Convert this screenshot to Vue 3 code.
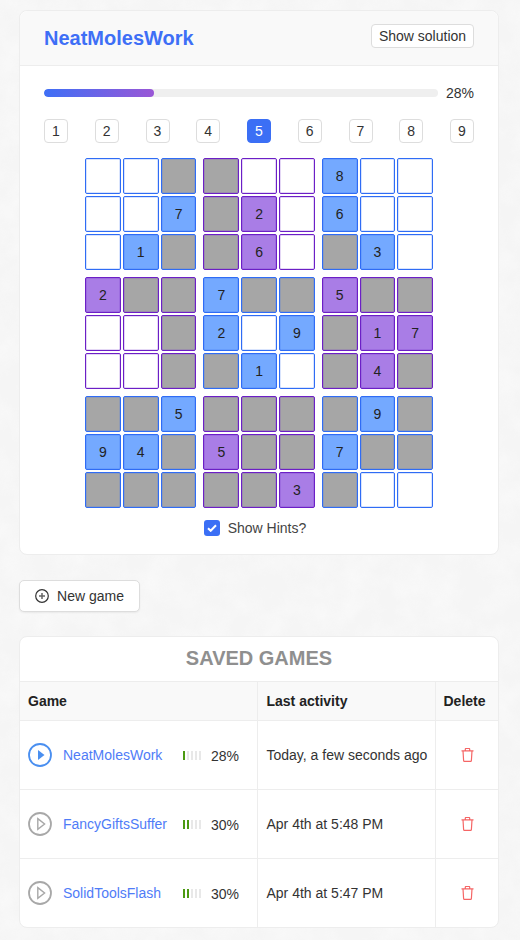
<script setup>
const rows = [
  '__x|x__|8__',
  '__7|x2_|6__',
  '_1x|x6_|x3_',
  '2xx|7xx|5xx',
  '__x|2_9|x17',
  '__x|x1_|x4x',
  'xx5|xxx|x9x',
  '94x|5xx|7xx',
  'xxx|xx3|x__',
]
const cell = (ch) => (ch === '_' ? 'empty' : ch === 'x' ? 'grey' : 'filled')
const boxes = []
for (let by = 0; by < 3; by++) {
  for (let bx = 0; bx < 3; bx++) {
    const cells = []
    for (let y = 0; y < 3; y++) {
      const part = rows[by * 3 + y].split('|')[bx]
      for (const ch of part) cells.push(ch)
    }
    boxes.push({ id: by * 3 + bx, purple: (by + bx) % 2 === 1, cells })
  }
}
const digits = [1, 2, 3, 4, 5, 6, 7, 8, 9]
const games = [
  { name: 'NeatMolesWork', pct: 28, bars: 1, when: 'Today, a few seconds ago', active: true },
  { name: 'FancyGiftsSuffer', pct: 30, bars: 2, when: 'Apr 4th at 5:48 PM', active: false },
  { name: 'SolidToolsFlash', pct: 30, bars: 2, when: 'Apr 4th at 5:47 PM', active: false },
]
</script>

<template>
  <div class="page">
    <svg class="texture" width="520" height="940" aria-hidden="true">
      <filter id="paper" x="0" y="0" width="100%" height="100%">
        <feTurbulence type="fractalNoise" baseFrequency="0.035" numOctaves="4" seed="7"/>
        <feColorMatrix type="matrix" values="0 0 0 0 1  0 0 0 0 1  0 0 0 0 1  1.6 0 0 0 -0.55"/>
      </filter>
      <rect width="520" height="940" filter="url(#paper)"/>
    </svg>
    <section class="card game">
      <header class="head">
        <h1 class="title">NeatMolesWork</h1>
        <button class="btn small">Show solution</button>
      </header>
      <div class="body">
        <div class="progress">
          <div class="track"><div class="fill"></div></div>
          <span class="pct">28%</span>
        </div>
        <div class="digits">
          <button v-for="d in digits" :key="d" class="digit" :class="{ on: d === 5 }">{{ d }}</button>
        </div>
        <div class="board">
          <div v-for="b in boxes" :key="b.id" class="box" :class="{ purple: b.purple }">
            <div v-for="(c, i) in b.cells" :key="i" class="cell" :class="cell(c)">{{ c === '_' || c === 'x' ? '' : c }}</div>
          </div>
        </div>
        <label class="hints">
          <span class="check">
            <svg width="10" height="8" viewBox="0 0 10 8" fill="none"><path d="M1 4.2 3.7 6.8 9 1.2" stroke="#fff" stroke-width="2"/></svg>
          </span>
          Show Hints?
        </label>
      </div>
    </section>

    <button class="btn newgame">
      <svg width="14" height="14" viewBox="0 0 14 14" fill="none" stroke="#333" stroke-width="1.2">
        <circle cx="7" cy="7" r="6.3"/><path d="M7 4v6M4 7h6" stroke="#666" stroke-width="1.5"/>
      </svg>
      New game
    </button>

    <section class="card saved">
      <h2 class="saved-title">SAVED GAMES</h2>
      <table class="table">
        <colgroup><col class="c1"><col class="c2"><col class="c3"></colgroup>
        <thead>
          <tr><th>Game</th><th>Last activity</th><th class="th-del">Delete</th></tr>
        </thead>
        <tbody>
          <tr v-for="g in games" :key="g.name">
            <td>
              <div class="game-cell">
                <svg class="play" width="24" height="24" viewBox="0 0 24 24" fill="none" :stroke="g.active ? '#4a8ff0' : '#a8a8a8'" stroke-width="1.8">
                  <circle cx="12" cy="12" r="11"/>
                  <path v-if="g.active" d="M10 7 16.5 12 10 17Z" fill="#4a8ff0" stroke="none"/>
                  <path v-else d="M9.8 6.6 16.6 12 9.8 17.4Z" stroke-width="1.4"/>
                </svg>
                <a class="link">{{ g.name }}</a>
                <span class="mini">
                  <i v-for="n in 5" :key="n" :class="{ lit: n <= g.bars }"></i>
                </span>
                <span class="mini-pct">{{ g.pct }}%</span>
              </div>
            </td>
            <td>{{ g.when }}</td>
            <td class="del">
              <svg width="13" height="14" viewBox="0 0 13 14" fill="none" stroke="#f56565" stroke-width="1.2">
                <path d="M.5 2.8h12M2 2.8l.6 9.6c0 .6.4 1 1 1h5.8c.6 0 1-.4 1-1l.6-9.6M4.3 2.8V1.2c0-.4.3-.7.7-.7h3c.4 0 .7.3.7.7v1.6"/>
              </svg>
            </td>
          </tr>
        </tbody>
      </table>
    </section>
  </div>
</template>

<style>
html, body { background: #f5f5f5; margin: 0; }
</style>

<style scoped>
.page {
  position: relative;
  box-sizing: border-box;
  width: 520px;
  height: 940px;
  overflow: hidden;
  padding: 10px 21px 0 19px;
  font-family: "Liberation Sans", Arial, sans-serif;
  font-size: 14px;
  color: #333;
}
.texture {
  position: absolute;
  inset: 0;
  opacity: .45;
}
.card {
  position: relative;
  background: #fff;
  border: 1px solid #ededed;
  border-radius: 8px;
}
.game { height: 545px; box-sizing: border-box; }
.head {
  display: flex;
  align-items: center;
  justify-content: space-between;
  height: 55px;
  box-sizing: border-box;
  padding: 0 24px;
  background: #f9f9f9;
  border-bottom: 1px solid #ededed;
  border-radius: 8px 8px 0 0;
}
.title {
  margin: 0;
  font-size: 20px;
  font-weight: 700;
  color: #3e6ff6;
}
.btn {
  font-family: inherit;
  color: #333;
  background: #fff;
  border: 1px solid #ddd;
  border-radius: 4px;
  padding: 0;
}
.small { height: 24px; width: 103px; font-size: 14px; margin-top: -5px; }
.body { padding: 16px 24px 0; }
.progress {
  display: flex;
  align-items: center;
  gap: 8px;
  height: 22px;
}
.track {
  flex: 1;
  height: 8px;
  background: #efefef;
  border-radius: 4px;
  overflow: hidden;
}
.fill {
  width: 28%;
  height: 100%;
  border-radius: 4px;
  background: linear-gradient(90deg, #3e6ff6, #9a57d6);
}
.pct { width: 28px; font-size: 14px; text-align: right; }
.digits {
  display: flex;
  justify-content: space-between;
  margin-top: 15px;
}
.digit {
  box-sizing: border-box;
  width: 24px;
  height: 24px;
  padding: 0;
  font-family: inherit;
  font-size: 14px;
  color: #333;
  background: #fff;
  border: 1px solid #ddd;
  border-radius: 4px;
}
.digit.on {
  background: #3b6ff5;
  border-color: #3b6ff5;
  color: #fff;
}
.board {
  display: grid;
  grid-template-columns: repeat(3, 111.33px);
  gap: 7px;
  justify-content: center;
  margin: 15px -1px 0 -0.8px;
}
.box {
  display: grid;
  grid-template-columns: repeat(3, 1fr);
  grid-auto-rows: 36px;
  gap: 2px;
  --line: #2f6cf5;
  --soft: rgba(47, 108, 245, .18);
  --tint: #74a9ff;
}
.box.purple {
  --line: #6c1fc6;
  --soft: rgba(108, 31, 198, .18);
  --tint: #a97de6;
}
.cell {
  box-sizing: border-box;
  display: flex;
  align-items: center;
  justify-content: center;
  border: 1px solid var(--line);
  border-radius: 2px;
  box-shadow: inset 0 0 0 1px var(--soft);
  font-size: 14px;
  color: #222;
}
.empty { background: #fff; }
.grey { background: #a6a6a6; }
.filled { background: var(--tint); }
.hints {
  display: flex;
  align-items: center;
  justify-content: center;
  gap: 8px;
  margin-top: 12px;
  padding-right: 8px;
  height: 16px;
  color: #444;
}
.check {
  display: flex;
  align-items: center;
  justify-content: center;
  width: 16px;
  height: 16px;
  background: #3b6ff5;
  border-radius: 3px;
}
.newgame {
  position: relative;
  display: flex;
  align-items: center;
  justify-content: center;
  gap: 8px;
  box-sizing: border-box;
  width: 121px;
  height: 32px;
  margin: 25px 0 24px;
  font-size: 14px;
  border-radius: 5px;
  box-shadow: 0 1px 2px rgba(0, 0, 0, .06);
}
.saved { overflow: hidden; }
.saved-title {
  margin: 0;
  height: 44px;
  line-height: 42px;
  box-sizing: border-box;
  text-align: center;
  font-size: 20px;
  font-weight: 700;
  color: #8f8f8f;
}
.table {
  width: 100%;
  table-layout: fixed;
  border-collapse: collapse;
}
.c1 { width: 237px; }
.c2 { width: 178px; }
th, td {
  border-top: 1px solid #ededed;
  border-left: 1px solid #ededed;
  padding: 0 8px 0 9px;
  text-align: left;
  white-space: nowrap;
}
th:first-child, td:first-child { border-left: 0; padding-left: 8px; }
th {
  height: 38px;
  background: #f9f9f9;
  font-size: 14px;
  font-weight: 700;
  color: #222;
}
th.th-del { padding-left: 8px; }
td { height: 68px; color: #333; }
.game-cell { display: flex; align-items: center; }
.play { flex: none; margin-right: 11px; }
.link { width: 120px; flex: none; color: #4f7cf7; }
.mini { display: flex; gap: 2px; width: 18px; flex: none; }
.mini i {
  display: block;
  width: 2px;
  height: 9px;
  background: #e8e8e8;
}
.mini i.lit { background: #4c9a12; }
.mini-pct { margin-left: 10px; position: relative; top: 1px; }
.del { text-align: center; padding: 0 0 0 1px; line-height: 0; }
</style>
